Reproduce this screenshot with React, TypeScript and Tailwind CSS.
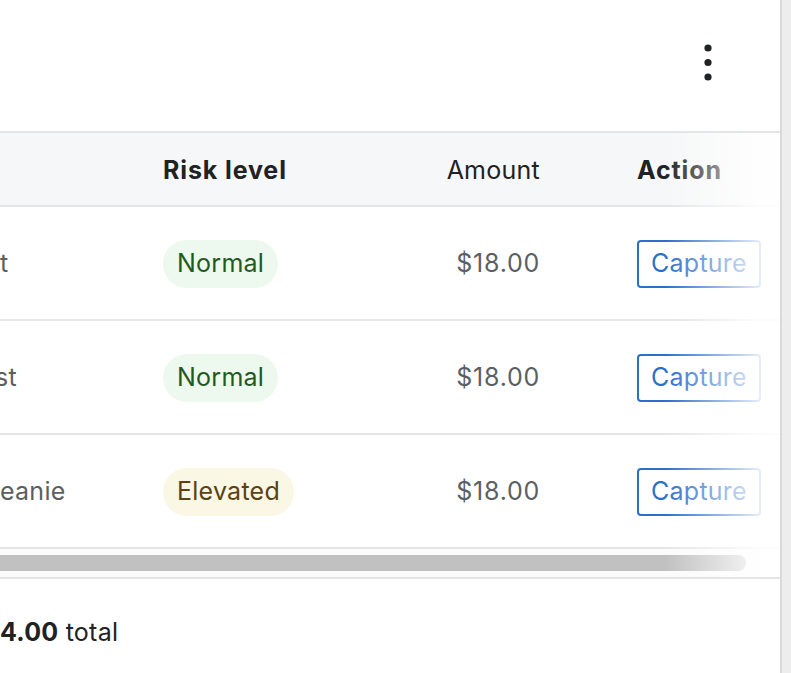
type Order = {
  id: string;
  name: string;
  risk: "Normal" | "Elevated";
  amount: string;
};

const orders: Order[] = [
  { id: "1", name: "t", risk: "Normal", amount: "$18.00" },
  { id: "2", name: "st", risk: "Normal", amount: "$18.00" },
  { id: "3", name: "eanie", risk: "Elevated", amount: "$18.00" },
];

function Kebab() {
  return (
    <svg width="10" height="40" viewBox="0 0 10 40" fill="#202223">
      <circle cx="5" cy="5" r="3.6" />
      <circle cx="5" cy="19.5" r="3.6" />
      <circle cx="5" cy="34" r="3.6" />
    </svg>
  );
}

function RiskBadge({ risk }: { risk: Order["risk"] }) {
  const styles =
    risk === "Normal"
      ? "bg-[#edf8ee] text-[#1f5a22]"
      : "bg-[#faf7e4] text-[#5a4212]";
  return (
    <span
      className={`inline-flex h-[48px] items-center rounded-full px-[14px] ${styles}`}
    >
      {risk}
    </span>
  );
}

export default function App() {
  return (
    <div
      className="flex h-[673px] w-[791px] bg-[#ededed] text-[25px] tracking-[0.01em] text-[#202223]"
      style={{ fontFamily: "Inter, 'Noto Sans', sans-serif" }}
    >
      <div className="flex w-[782px] flex-col border-r-2 border-[#dadada] bg-white">
        {/* CARD HEADER */}
        <div className="flex h-[133px] shrink-0 items-start justify-end border-b-2 border-[#e4e5e7] pr-[63px] pt-[43px]">
          <button type="button" className="px-1">
            <Kebab />
          </button>
        </div>

        {/* TABLE */}
        <div className="relative overflow-hidden">
          <div className="grid h-[74px] grid-cols-[163px_237px_140px_1fr] items-center border-b-2 border-[#e4e5e7] bg-[#f6f7f8] pt-[3px]">
            <div />
            <div className="font-bold tracking-[0.035em]">Risk level</div>
            <div className="text-right">Amount</div>
            <div className="pl-[97px] font-bold tracking-[0.035em]">Action</div>
          </div>

          {orders.map((order) => (
            <div
              key={order.id}
              className="grid h-[114px] grid-cols-[163px_237px_140px_1fr] items-center border-b-2 border-[#e4e5e7] pt-[2px]"
            >
              <div className="overflow-hidden whitespace-nowrap text-[#5c5f62]">
                <span className={order.id === "2" ? "-ml-[5px] block" : "block"}>
                  {order.name}
                </span>
              </div>
              <div>
                <RiskBadge risk={order.risk} />
              </div>
              <div className="text-right tracking-[0.03em] text-[#5c5f62]">
                {order.amount}
              </div>
              <div className="pl-[97px]">
                <button
                  type="button"
                  className="h-[48px] w-[124px] rounded-[4px] border-2 border-[#2c6ecb] text-[#2c6ecb]"
                >
                  Capture
                </button>
              </div>
            </div>
          ))}

          {/* scrollbar */}
          <div className="flex h-[28px] items-center bg-[#fbfbfb] pr-[34px]">
            <div className="h-[16px] flex-1 rounded-r-full bg-[#c1c1c1]" />
          </div>

          {/* fade at the scroll edge */}
          <div className="pointer-events-none absolute inset-y-0 right-0 w-[115px] bg-gradient-to-l from-white/90 from-15% to-transparent" />
        </div>

        {/* FOOTER */}
        <div className="flex flex-1 items-start border-t-2 border-[#e4e5e7] pt-[35px]">
          <p>
            <span className="font-bold">4.00</span> total
          </p>
        </div>
      </div>
    </div>
  );
}
